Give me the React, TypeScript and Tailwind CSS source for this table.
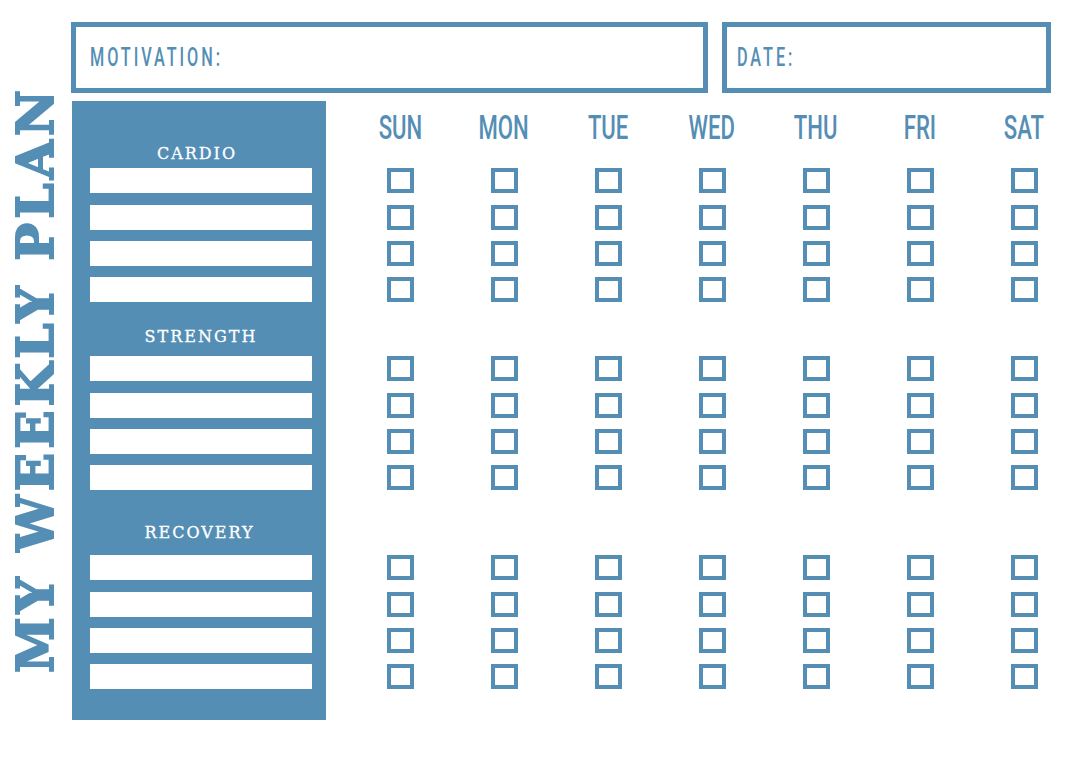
import React from "react";

const days = ["SUN", "MON", "TUE", "WED", "THU", "FRI", "SAT"];
const rowGaps = ["mt-0", "mt-[12px]", "mt-[11px]", "mt-[11px]"];

function Bars() {
  return (
    <div className="flex flex-col">
      {rowGaps.map((g, i) => (
        <div key={i} className={`${g} h-[25px] w-[222px] bg-white`} />
      ))}
    </div>
  );
}

function Boxes() {
  return (
    <div className="flex flex-col items-center">
      {rowGaps.map((g, i) => (
        <div key={i} className={`${g} h-[25px] w-[27px] border-[4px] border-[#548eb5]`} />
      ))}
    </div>
  );
}

function Label({ text }: { text: string }) {
  return (
    <div className="h-[20px] flex items-center justify-center text-white text-[16px] tracking-[2px] font-['DejaVu_Serif',serif] leading-none [-webkit-text-stroke:0.3px_white]">
      {text}
    </div>
  );
}

export default function App() {
  const cond = "font-['Roboto',sans-serif] font-medium inline-block scale-x-[0.65] leading-none";

  return (
    <div className="w-[1080px] h-[764px] bg-white flex text-[#548eb5] overflow-hidden">
      {/* side title */}
      <div className="w-[71px] flex justify-center items-start pt-[86px]">
        <div className="[writing-mode:vertical-rl] rotate-180 font-['DejaVu_Serif',serif] font-bold text-[50px] leading-none tracking-[4.3px] whitespace-nowrap [-webkit-text-stroke:2px_#548eb5]">
          MY WEEKLY PLAN
        </div>
      </div>

      <div className="flex flex-col pt-[22px]">
        <div className="flex gap-[14px]">
          <div className="w-[637px] h-[71px] border-[5px] border-[#548eb5] flex items-center pl-[14px]">
            <span className={`${cond} origin-left text-[25px] tracking-[4.5px]`}>MOTIVATION:</span>
          </div>
          <div className="w-[329px] h-[71px] border-[5px] border-[#548eb5] flex items-center pl-[10px]">
            <span className={`${cond} origin-left text-[25px] tracking-[4.5px]`}>DATE:</span>
          </div>
        </div>

        <div className="flex mt-[8px]">
          <div className="ml-[1px] w-[254px] bg-[#548eb5] flex flex-col pl-[18px] pr-[14px] pt-[43px] pb-[31px]">
            <div className="-ml-[8px]"><Label text="CARDIO" /></div>
            <div className="mt-[4px]"><Bars /></div>
            <div className="mt-[25px]"><Label text="STRENGTH" /></div>
            <div className="mt-[9px]"><Bars /></div>
            <div className="mt-[33px] -ml-[3px]"><Label text="RECOVERY" /></div>
            <div className="mt-[12px]"><Bars /></div>
          </div>

          <div className="ml-[22px] grid grid-cols-[repeat(7,104px)]">
            {days.map((d) => (
              <div key={d} className="flex flex-col items-center">
                <div className="h-[52px] w-full flex items-center justify-center">
                  <span className={`${cond} text-[34px]`}>{d}</span>
                </div>
                <div className="mt-[15px]"><Boxes /></div>
                <div className="mt-[54px]"><Boxes /></div>
                <div className="mt-[65px]"><Boxes /></div>
              </div>
            ))}
          </div>
        </div>
      </div>
    </div>
  );
}
